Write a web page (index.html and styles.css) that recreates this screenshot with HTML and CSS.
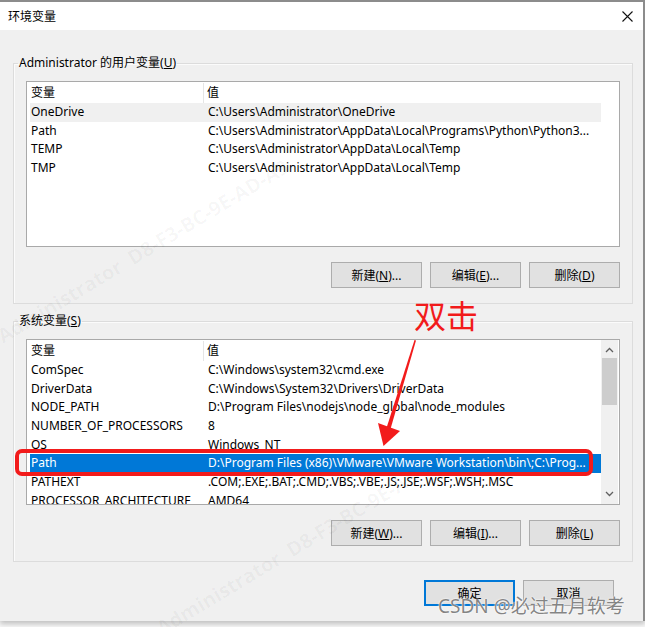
FILE: index.html
```html
<!DOCTYPE html>
<html lang="zh-CN">
<head>
<meta charset="utf-8">
<title>环境变量</title>
<link rel="stylesheet" href="styles.css">
</head>
<body>
<div class="window">
  <div class="titlebar">
    <span class="title">环境变量</span>
    <svg class="close" width="11" height="11" viewBox="0 0 11 11"><path d="M0.5 0.5 L10.5 10.5 M10.5 0.5 L0.5 10.5" stroke="#111" stroke-width="1.1" fill="none"/></svg>
  </div>
  <div class="content">
    <fieldset class="group">
      <legend>Administrator 的用户变量(<u>U</u>)</legend>
      <div class="list">
        <div class="rows">
          <div class="row head"><span class="c1">变量</span><span class="c2">值</span></div>
          <div class="row hover"><span class="c1">OneDrive</span><span class="c2">C:\Users\Administrator\OneDrive</span></div>
          <div class="row"><span class="c1">Path</span><span class="c2">C:\Users\Administrator\AppData\Local\Programs\Python\Python3...</span></div>
          <div class="row"><span class="c1">TEMP</span><span class="c2">C:\Users\Administrator\AppData\Local\Temp</span></div>
          <div class="row"><span class="c1">TMP</span><span class="c2">C:\Users\Administrator\AppData\Local\Temp</span></div>
        </div>
      </div>
      <div class="btns">
        <button>新建(<u>N</u>)...</button>
        <button>编辑(<u>E</u>)...</button>
        <button>删除(<u>D</u>)</button>
      </div>
    </fieldset>
    <fieldset class="group sys">
      <legend>系统变量(<u>S</u>)</legend>
      <div class="list">
        <div class="rows">
          <div class="row head"><span class="c1">变量</span><span class="c2">值</span></div>
          <div class="row"><span class="c1">ComSpec</span><span class="c2">C:\Windows\system32\cmd.exe</span></div>
          <div class="row"><span class="c1">DriverData</span><span class="c2">C:\Windows\System32\Drivers\DriverData</span></div>
          <div class="row"><span class="c1">NODE_PATH</span><span class="c2">D:\Program Files\nodejs\node_global\node_modules</span></div>
          <div class="row"><span class="c1">NUMBER_OF_PROCESSORS</span><span class="c2">8</span></div>
          <div class="row"><span class="c1">OS</span><span class="c2">Windows_NT</span></div>
          <div class="row selected"><span class="c1">Path</span><span class="c2">D:\Program Files (x86)\VMware\VMware Workstation\bin\;C:\Prog...</span></div>
          <div class="row"><span class="c1">PATHEXT</span><span class="c2">.COM;.EXE;.BAT;.CMD;.VBS;.VBE;.JS;.JSE;.WSF;.WSH;.MSC</span></div>
          <div class="row"><span class="c1">PROCESSOR_ARCHITECTURE</span><span class="c2">AMD64</span></div>
        </div>
        <div class="scrollbar">
          <svg class="arrow-up" width="9" height="6" viewBox="0 0 9 6"><path d="M1 5 L4.5 1.5 L8 5" stroke="#606060" stroke-width="1.3" fill="none"/></svg>
          <div class="thumb"></div>
          <svg class="arrow-down" width="9" height="6" viewBox="0 0 9 6"><path d="M1 1 L4.5 4.5 L8 1" stroke="#606060" stroke-width="1.3" fill="none"/></svg>
        </div>
      </div>
      <div class="btns">
        <button>新建(<u>W</u>)...</button>
        <button>编辑(<u>I</u>)...</button>
        <button>删除(<u>L</u>)</button>
      </div>
    </fieldset>
    <div class="dlg">
      <button class="default">确定</button>
      <button>取消</button>
    </div>
  </div>
</div>

<div class="wm wm1">Administrator&nbsp;&nbsp;D8-F3-BC-9E-AD-A9</div>
<div class="wm wm2">Administrator&nbsp;&nbsp;D8-F3-BC-9E-AD-A9</div>

<div class="highlight-box"></div>
<div class="note">双击</div>
<svg class="pointer" width="645" height="627" viewBox="0 0 645 627">
  <polygon points="414.5,340 416,340.5 390.5,429 386.5,428" fill="#f21b1b"/>
  <polygon points="378,423 400,431 383.5,446" fill="#f21b1b"/>
</svg>
<div class="csdn">CSDN @必过五月软考</div>
</body>
</html>
```

FILE: styles.css
```css
html, body {
  margin: 0;
  padding: 0;
}
body {
  background: #f7f7f7;
  font-family: "Noto Sans", "Noto Sans CJK SC", sans-serif;
  font-size: 12px;
  color: #000;
  width: 645px;
  height: 627px;
  overflow: hidden;
  position: relative;
}
.window {
  width: 643px;
  border-top: 2px solid #8c8c8c;
  border-right: 2px solid #8c8c8c;
  box-shadow: 0 3px 5px rgba(0, 0, 0, 0.22);
}
.titlebar {
  height: 28px;
  background: #fff;
  display: flex;
  align-items: center;
  justify-content: space-between;
  padding: 0 10px 0 8px;
}
.title {
  font-size: 12px;
}
.content {
  background: #f0f0f0;
  padding: 25px 0 15px 13px;
}
.group {
  box-sizing: border-box;
  width: 620px;
  margin: 0;
  border: 1px solid #dcdcdc;
  box-shadow: inset 1px 1px 0 #fbfbfb;
  padding: 0 12px 15px 12px;
}
.group.sys {
  margin-top: 9px;
}
.group legend {
  padding: 0 1px;
  margin-left: -8px;
  line-height: 16px;
  height: 16px;
}
.list {
  margin-top: 10px;
  box-sizing: border-box;
  height: 166px;
  border: 1px solid #a9a9a9;
  background: #fff;
  padding-left: 3px;
  overflow: hidden;
  display: flex;
}
.rows {
  width: 571px;
  flex: none;
  padding-top: 1px;
}
.row {
  display: grid;
  grid-template-columns: 174px 397px;
  height: 18.7px;
  line-height: 18.7px;
  white-space: nowrap;
}
.row span {
  overflow: hidden;
}
.row .c1 {
  padding-left: 1px;
}
.row .c2 {
  padding-left: 4px;
}
.row.head {
  height: 20px;
  line-height: 20px;
}
.row.head .c1 {
  border-right: 1px solid #e5e5e5;
}
.row.head .c2 {
  padding-left: 3px;
}
.row.hover {
  background: #f0f0f0;
}
.row.selected {
  background: #0078d7;
  color: #fff;
}
.scrollbar {
  width: 17px;
  flex: none;
  background: #f0f0f0;
  display: flex;
  flex-direction: column;
  align-items: center;
  padding-top: 7px;
  padding-bottom: 7px;
  box-sizing: border-box;
}
.thumb {
  width: 15px;
  height: 47px;
  background: #cdcdcd;
  margin-top: 5px;
  flex: none;
}
.arrow-down {
  margin-top: auto;
}
.btns {
  display: flex;
  justify-content: flex-end;
  gap: 8px;
  margin-top: 15px;
}
button {
  box-sizing: border-box;
  width: 91px;
  height: 26px;
  padding: 0;
  background: #e1e1e1;
  border: 1px solid #adadad;
  font-family: "Noto Sans", "Noto Sans CJK SC", sans-serif;
  font-size: 12px;
  color: #000;
}
.dlg {
  display: flex;
  justify-content: flex-end;
  gap: 8px;
  margin-top: 18px;
  padding-right: 29px;
}
button.default {
  border: 1px solid #0078d7;
  box-shadow: inset 0 0 0 1px #0078d7;
}
.wm {
  position: absolute;
  font-family: "Open Sans", sans-serif;
  font-weight: 700;
  font-size: 20px;
  color: rgba(0, 0, 0, 0.035);
  white-space: nowrap;
  transform-origin: 0 100%;
  transform: rotate(-31deg);
  pointer-events: none;
}
.wm1 {
  left: 6px;
  top: 322px;
}
.wm2 {
  left: 165px;
  top: 614px;
}
.highlight-box {
  position: absolute;
  left: 15px;
  top: 449px;
  width: 578px;
  height: 27px;
  box-sizing: border-box;
  border: 4px solid #f21b1b;
  border-radius: 7px;
}
.note {
  position: absolute;
  left: 414px;
  top: 296px;
  font-family: "Noto Sans CJK SC", sans-serif;
  font-size: 32px;
  line-height: 36px;
  color: #f21b1b;
}
.pointer {
  position: absolute;
  left: 0;
  top: 0;
}
.csdn {
  position: absolute;
  left: 438px;
  top: 594px;
  font-family: "Noto Sans", "Noto Sans CJK SC", sans-serif;
  font-size: 19px;
  line-height: 24px;
  color: rgba(110, 110, 110, 0.85);
  text-shadow: 0 0 1px #fff, 0 0 2px #fff;
  white-space: nowrap;
}
```
